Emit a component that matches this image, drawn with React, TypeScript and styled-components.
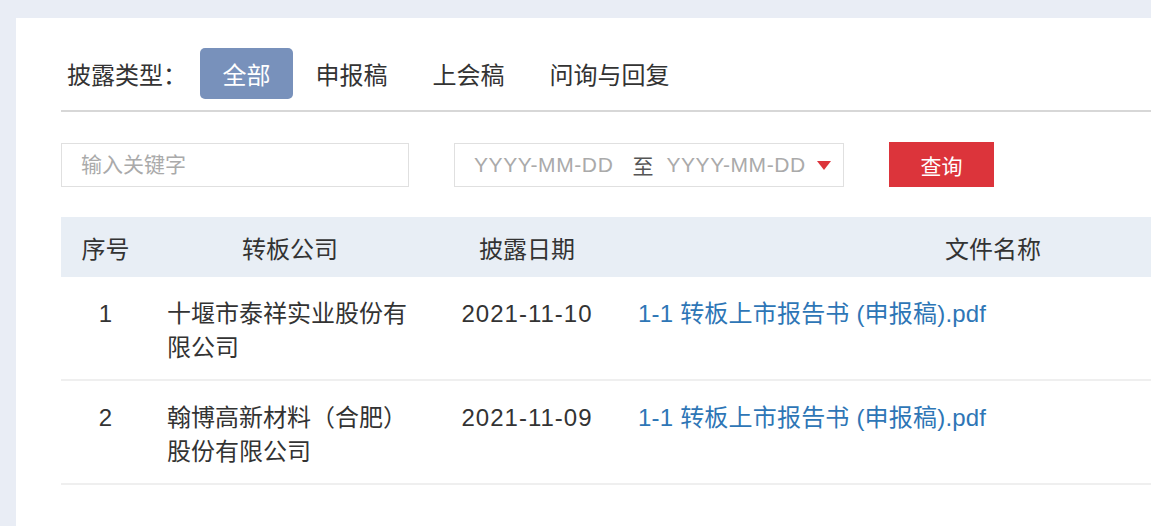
import React from 'react';
import styled, { createGlobalStyle } from 'styled-components';

type Disclosure = {
  id: number;
  company: string;
  date: string;
  file: string;
};

const TABS = ['全部', '申报稿', '上会稿', '问询与回复'];

const ROWS: Disclosure[] = [
  { id: 1, company: '十堰市泰祥实业股份有限公司', date: '2021-11-10', file: '1-1 转板上市报告书 (申报稿).pdf' },
  { id: 2, company: '翰博高新材料（合肥）股份有限公司', date: '2021-11-09', file: '1-1 转板上市报告书 (申报稿).pdf' },
];

const COLUMNS = '89px 280px 194px 738px';

const GlobalStyle = createGlobalStyle`
  html, body {
    margin: 0;
    padding: 0;
    background: #e9edf5;
    overflow: hidden;
  }
  body {
    font-family: 'Liberation Sans', 'Noto Sans CJK SC', sans-serif;
    color: #333;
  }
  * {
    box-sizing: border-box;
  }
`;

const Panel = styled.div`
  margin: 18px 0 0 16px;
  width: 1391px;
  min-height: 520px;
  padding: 30px 45px 40px;
  background: #fff;
`;

const TabBar = styled.div`
  display: flex;
  align-items: center;
  padding-bottom: 11px;
  border-bottom: 2px solid #d7d7d7;
`;

const TabLabel = styled.span`
  padding-left: 6px;
  margin-right: 13px;
  font-size: 24px;
  color: #333;
`;

const Tab = styled.button<{ $active?: boolean }>`
  height: 51px;
  padding: 0 22.5px;
  border: none;
  border-radius: 5px;
  font-family: inherit;
  font-size: 24px;
  cursor: pointer;
  background: ${(p) => (p.$active ? '#7891bb' : 'transparent')};
  color: ${(p) => (p.$active ? '#fff' : '#333')};
`;

const SearchRow = styled.div`
  display: flex;
  align-items: flex-start;
  gap: 45px;
  margin-top: 31px;
`;

const KeywordInput = styled.input`
  width: 348px;
  height: 44px;
  padding: 0 19px;
  border: 1px solid #e0e0e0;
  outline: none;
  font-family: inherit;
  font-size: 21px;
  color: #333;

  &::placeholder {
    color: #aaa;
  }
`;

const DateBox = styled.div`
  display: flex;
  align-items: center;
  width: 390px;
  height: 44px;
  padding: 0 12px 0 19px;
  border: 1px solid #e0e0e0;
  font-size: 21px;
`;

const DatePart = styled.span`
  color: #aaa;
  letter-spacing: 0.6px;
`;

const DateSep = styled.span`
  margin: 0 13px 0 19px;
  color: #555;
`;

const Caret = styled.span`
  margin-left: auto;
  width: 0;
  height: 0;
  border-left: 7px solid transparent;
  border-right: 7px solid transparent;
  border-top: 9px solid #dc343b;
`;

const QueryButton = styled.button`
  width: 105px;
  height: 45px;
  margin-top: -1px;
  border: none;
  background: #dc343b;
  color: #fff;
  font-family: inherit;
  font-size: 21px;
  cursor: pointer;
`;

const Table = styled.div`
  margin-top: 30px;
`;

const HeadRow = styled.div`
  display: grid;
  grid-template-columns: ${COLUMNS};
  align-items: center;
  height: 60px;
  background: #e8eef5;
  font-size: 24px;
  text-align: center;
  color: #333;
`;

const BodyRow = styled.div`
  display: grid;
  grid-template-columns: ${COLUMNS};
  align-items: start;
  padding: 20px 0 14px;
  border-bottom: 2px solid #efefef;
  font-size: 24px;
  line-height: 34px;
  color: #333;
`;

const Cell = styled.div<{ $align?: 'left' | 'center' }>`
  text-align: ${(p) => p.$align ?? 'center'};
`;

const DateCell = styled.div`
  text-align: center;
  letter-spacing: 1px;
`;

const CompanyCell = styled.div`
  padding: 0 13px 0 17px;
  text-align: left;
`;

const FileLink = styled.a`
  padding-left: 14px;
  color: #2e76b6;
  text-decoration: none;
  white-space: nowrap;
  letter-spacing: 0.2px;
`;

export default function App() {
  return (
    <>
      <GlobalStyle />
      <Panel>
        <TabBar>
          <TabLabel>披露类型：</TabLabel>
          {TABS.map((t, i) => (
            <Tab key={t} $active={i === 0}>
              {t}
            </Tab>
          ))}
        </TabBar>

        <SearchRow>
          <KeywordInput placeholder="输入关键字" />
          <DateBox>
            <DatePart>YYYY-MM-DD</DatePart>
            <DateSep>至</DateSep>
            <DatePart>YYYY-MM-DD</DatePart>
            <Caret />
          </DateBox>
          <QueryButton>查询</QueryButton>
        </SearchRow>

        <Table>
          <HeadRow>
            <Cell>序号</Cell>
            <Cell>转板公司</Cell>
            <Cell>披露日期</Cell>
            <Cell>文件名称</Cell>
          </HeadRow>
          {ROWS.map((r) => (
            <BodyRow key={r.id}>
              <Cell>{r.id}</Cell>
              <CompanyCell>{r.company}</CompanyCell>
              <DateCell>{r.date}</DateCell>
              <Cell $align="left">
                <FileLink href="#">{r.file}</FileLink>
              </Cell>
            </BodyRow>
          ))}
        </Table>
      </Panel>
    </>
  );
}
